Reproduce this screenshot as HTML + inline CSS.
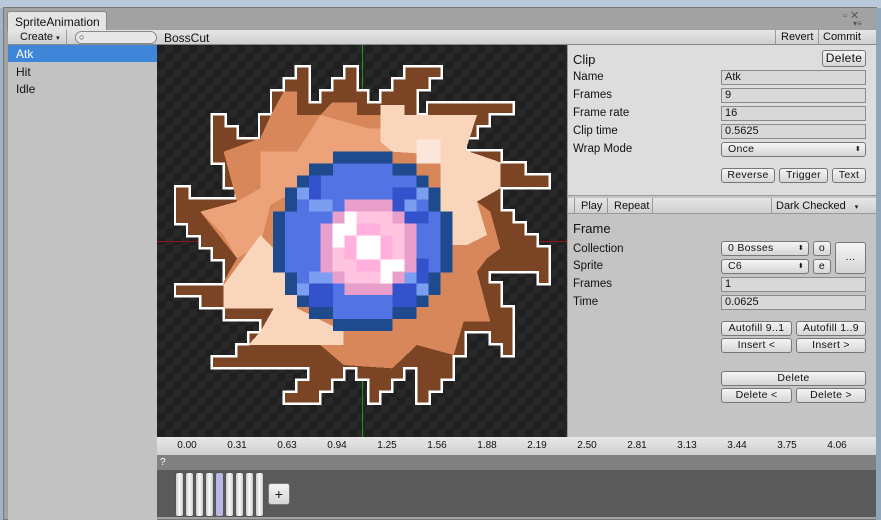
<!DOCTYPE html><html><head><style>
*{margin:0;padding:0;box-sizing:border-box}
body{width:881px;height:520px;overflow:hidden;background:#9fb4c8;font-family:"Liberation Sans",sans-serif;font-size:11px;color:#111;position:relative}
.a{position:absolute}
.btn{position:absolute;background:linear-gradient(#f4f4f4,#d6d6d6);border:1px solid #777;border-radius:3px;font-size:10.5px;text-align:center;line-height:13px;height:15px;letter-spacing:.3px}
.fld{position:absolute;background:#d8d8d8;border:1px solid #8a8a8a;height:15px;line-height:13px;padding-left:3px;font-size:11px}
.lbl{position:absolute;font-size:11.5px;left:573px}
.tk{position:absolute;top:440px;font-size:10px;width:40px;text-align:center}
.fr{position:absolute;top:472px;width:9px;height:45px;background:linear-gradient(90deg,#ccc,#fafafa,#ccc);border:1px solid #555;border-radius:3px}
</style></head><body>
<div class="a" style="left:0;top:0;width:881px;height:8px;background:#b9c9da"></div>
<div class="a" style="left:3px;top:7px;width:874px;height:513px;background:#a2a2a2;border:1px solid #777"></div>
<div class="a" style="left:7px;top:11px;width:100px;height:20px;background:#e4e4e4;border:1px solid #888;border-bottom:none;border-radius:3px 3px 0 0;font-size:12px;padding:3px 0 0 7px;overflow:hidden;white-space:nowrap">SpriteAnimation</div>
<div class="a" style="left:843px;top:9px;font-size:11px;color:#555">▫ ✕</div>
<div class="a" style="left:853px;top:19px;font-size:8px;color:#555">▾≡</div>
<div class="a" style="left:8px;top:30px;width:868px;height:15px;background:linear-gradient(#e6e6e6,#cfcfcf);border-bottom:1px solid #888"></div>
<div class="a" style="left:13px;top:30px;width:54px;height:15px;border-right:1px solid #999;font-size:11px;padding:1px 0 0 7px">Create <span style="font-size:7px">▾</span></div>
<div class="a" style="left:75px;top:31px;width:82px;height:13px;border:1px solid #888;border-radius:7px;background:#e8e8e8;font-size:9px;padding-left:3px;line-height:10px">○</div>
<div class="a" style="left:164px;top:31px;font-size:12px">BossCut</div>
<div class="a" style="left:775px;top:30px;width:44px;height:15px;border-left:1px solid #999;border-right:1px solid #999;font-size:11px;padding:1px 0 0 5px">Revert</div>
<div class="a" style="left:823px;top:31px;font-size:11px">Commit</div>
<div class="a" style="left:8px;top:45px;width:149px;height:475px;background:#c2c2c2"></div>
<div class="a" style="left:8px;top:45px;width:149px;height:17px;background:#3f86d8;color:#fff;font-size:12px;padding:2px 0 0 8px">Atk</div>
<div class="a" style="left:16px;top:65px;font-size:12px">Hit</div>
<div class="a" style="left:16px;top:82px;font-size:12px">Idle</div>
<div class="a" style="left:157px;top:45px;width:410px;height:392px;background-color:#1f1f1f;background-image:linear-gradient(45deg,#282828 25%,transparent 25%,transparent 75%,#282828 75%),linear-gradient(45deg,#282828 25%,transparent 25%,transparent 75%,#282828 75%);background-size:16px 16px;background-position:0 0,8px 8px"></div>
<div class="a" style="left:157px;top:241px;width:410px;height:1px;background:#8a1a1a"></div>
<div class="a" style="left:362px;top:45px;width:1px;height:392px;background:#1a9a1a"></div>
<svg class="a" style="left:157px;top:45px" width="410" height="392" viewBox="0 0 1230 1176" shape-rendering="crispEdges">
<polygon fill="#7b4424" stroke="#fff" stroke-width="7" points="416,64 458,64 458,172 490,172 490,136 526,136 526,100 562,100 562,64 602,64 602,136 634,136 634,172 670,172 670,136 706,136 706,100 742,100 742,64 854,64 854,100 818,100 818,136 782,136 782,208 810,208 810,172 1070,172 1070,208 998,208 998,244 962,244 962,280 926,280 926,316 1034,316 1034,352 1106,352 1106,388 1178,388 1178,430 1034,430 1034,496 1070,496 1070,532 1106,532 1106,568 1142,568 1142,604 1178,604 1178,718 1142,718 1142,682 998,682 998,712 1034,712 1034,784 1070,784 1070,934 1034,934 1034,898 998,898 998,862 926,862 926,934 890,934 890,1004 854,1004 854,1040 818,1040 818,1076 778,1076 778,970 742,970 742,1004 706,1004 706,1040 670,1040 670,1076 634,1076 634,1004 598,1004 598,970 562,970 562,1004 526,1004 526,1040 490,1040 490,1076 380,1076 380,1040 418,1040 418,1004 454,1004 454,970 164,970 164,934 238,934 238,898 274,898 274,862 310,862 310,826 200,826 200,790 130,790 130,754 54,754 54,718 200,718 200,646 164,646 164,610 128,610 128,574 90,574 90,538 54,538 54,424 98,424 98,460 236,460 236,430 200,430 200,356 164,356 164,208 206,208 206,244 242,244 242,280 306,280 306,208 342,208 342,136 380,136 380,100 416,100"/>
<polygon fill="#d8875a" points="380,140 420,140 420,210 490,210 526,172 600,172 600,210 742,210 780,250 960,210 926,316 1030,352 1030,430 960,470 1000,500 1030,610 990,640 960,680 1000,830 920,830 890,930 780,900 706,970 560,960 490,900 420,900 310,860 350,790 200,790 200,710 240,640 130,500 240,470 200,320 310,280 342,210"/>
<polygon fill="#eda37a" points="490,210 634,250 780,250 780,320 560,320 480,400 340,480 310,600 240,640 200,570 130,500 240,470 310,430 310,320 420,320"/>
<polygon fill="#f9d5bc" points="670,180 742,180 742,210 960,210 926,316 1030,352 1030,430 960,470 990,570 930,600 850,600 850,330 706,320 670,290"/>
<polygon fill="#f9d5bc" points="200,720 310,570 420,680 420,790 560,860 560,900 420,900 310,900 274,900 310,860 350,790 200,790"/>
<polygon fill="#fbe6dc" points="778,284 850,284 850,356 778,356"/>
<polygon fill="#1f4a8e" points="528,320 706,320 706,356 778,356 778,392 814,392 814,428 850,428 850,500 886,500 886,682 850,682 850,750 814,750 814,786 778,786 778,822 706,822 706,858 528,858 528,822 456,822 456,786 420,786 420,750 384,750 384,682 348,682 348,500 384,500 384,428 420,428 420,392 456,392 456,356 528,356"/>
<polygon fill="#5273e4" points="528,356 706,356 706,392 778,392 778,428 814,428 814,500 850,500 850,682 814,682 814,750 778,750 778,786 706,786 706,822 528,822 528,786 456,786 456,750 420,750 420,682 384,682 384,500 420,500 420,428 456,428 456,392 528,392"/>
<g fill="#3352cc"><rect x="456" y="392" width="36" height="72"/><rect x="706" y="428" width="72" height="72"/><rect x="742" y="500" width="72" height="36"/><rect x="456" y="716" width="72" height="70"/><rect x="706" y="716" width="72" height="70"/><rect x="778" y="640" width="36" height="76"/></g>
<g fill="#7b9ef0"><rect x="420" y="428" width="36" height="36"/><rect x="778" y="428" width="36" height="36"/><rect x="456" y="464" width="70" height="36"/><rect x="742" y="464" width="36" height="36"/><rect x="456" y="680" width="70" height="36"/><rect x="742" y="680" width="36" height="36"/><rect x="420" y="716" width="36" height="36"/><rect x="778" y="716" width="36" height="36"/></g>
<polygon fill="#e89fcc" points="562,464 706,464 706,500 742,500 742,536 778,536 778,682 742,682 742,716 706,716 706,750 562,750 562,716 526,716 526,682 490,682 490,536 526,536 526,500 562,500"/>
<polygon fill="#ffc4df" points="598,500 706,500 706,536 742,536 742,680 706,680 706,716 562,716 562,680 526,680 526,608 562,608 562,536 598,536"/>
<g fill="#ffb0dc"><rect x="598" y="536" width="72" height="36"/><rect x="562" y="572" width="36" height="72"/><rect x="670" y="572" width="36" height="72"/><rect x="598" y="644" width="72" height="36"/></g>
<g fill="#fff"><rect x="562" y="500" width="36" height="36"/><rect x="526" y="536" width="72" height="36"/><rect x="526" y="572" width="36" height="36"/><rect x="598" y="572" width="72" height="72"/><rect x="670" y="644" width="72" height="36"/><rect x="670" y="680" width="36" height="36"/></g>
</svg>
<div class="a" style="left:567px;top:45px;width:309px;height:150px;background:#dddddd;border-left:1px solid #999"></div>
<div class="a" style="left:567px;top:195px;width:309px;height:242px;background:#c4c4c4;border-left:1px solid #999;border-top:1px solid #999"></div>
<div class="a" style="left:876px;top:8px;width:5px;height:512px;background:#8fa5bb"></div>
<div class="a" style="left:573px;top:52px;font-size:13px">Clip</div>
<div class="btn" style="left:822px;top:50px;width:44px;height:17px;font-size:12px;line-height:15px">Delete</div>
<div class="lbl" style="top:71px">Name</div><div class="fld" style="left:721px;top:70px;width:145px">Atk</div>
<div class="lbl" style="top:89px">Frames</div><div class="fld" style="left:721px;top:88px;width:145px">9</div>
<div class="lbl" style="top:107px">Frame rate</div><div class="fld" style="left:721px;top:106px;width:145px">16</div>
<div class="lbl" style="top:125px">Clip time</div><div class="fld" style="left:721px;top:124px;width:145px">0.5625</div>
<div class="lbl" style="top:143px">Wrap Mode</div><div class="btn" style="left:721px;top:142px;width:145px;text-align:left;padding-left:6px">Once<span style="float:right;margin-right:4px;font-size:7px">⬍</span></div>
<div class="btn" style="left:721px;top:168px;width:54px">Reverse</div>
<div class="btn" style="left:779px;top:168px;width:49px">Trigger</div>
<div class="btn" style="left:832px;top:168px;width:34px">Text</div>
<div class="a" style="left:568px;top:198px;width:308px;height:16px;background:linear-gradient(#e6e6e6,#cfcfcf);border-bottom:1px solid #999"></div>
<div class="a" style="left:574px;top:198px;width:34px;height:16px;border-left:1px solid #999;border-right:1px solid #999;padding:2px 0 0 6px;font-size:11px">Play</div>
<div class="a" style="left:614px;top:200px;font-size:11px">Repeat</div>
<div class="a" style="left:652px;top:198px;width:1px;height:16px;background:#999"></div>
<div class="a" style="left:771px;top:198px;width:1px;height:16px;background:#999"></div>
<div class="a" style="left:776px;top:200px;font-size:11px">Dark Checked <span style="font-size:7px;margin-left:6px">▾</span></div>
<div class="a" style="left:573px;top:221px;font-size:13px">Frame</div>
<div class="lbl" style="top:243px">Collection</div><div class="btn" style="left:721px;top:241px;width:88px;text-align:left;padding-left:6px">0 Bosses<span style="float:right;margin-right:4px;font-size:7px">⬍</span></div>
<div class="btn" style="left:813px;top:241px;width:18px">o</div>
<div class="lbl" style="top:260px">Sprite</div><div class="btn" style="left:721px;top:259px;width:88px;text-align:left;padding-left:6px">C6<span style="float:right;margin-right:4px;font-size:7px">⬍</span></div>
<div class="btn" style="left:813px;top:259px;width:18px">e</div>
<div class="btn" style="left:835px;top:242px;width:31px;height:32px;line-height:28px">...</div>
<div class="lbl" style="top:278px">Frames</div><div class="fld" style="left:721px;top:277px;width:145px">1</div>
<div class="lbl" style="top:296px">Time</div><div class="fld" style="left:721px;top:295px;width:145px">0.0625</div>
<div class="btn" style="left:721px;top:321px;width:71px">Autofill 9..1</div>
<div class="btn" style="left:796px;top:321px;width:70px">Autofill 1..9</div>
<div class="btn" style="left:721px;top:338px;width:71px">Insert &lt;</div>
<div class="btn" style="left:796px;top:338px;width:70px">Insert &gt;</div>
<div class="btn" style="left:721px;top:371px;width:145px">Delete</div>
<div class="btn" style="left:721px;top:388px;width:71px">Delete &lt;</div>
<div class="btn" style="left:796px;top:388px;width:70px">Delete &gt;</div>
<div class="a" style="left:157px;top:437px;width:719px;height:18px;background:linear-gradient(#e8e8e8,#d0d0d0)"></div>
<div class="tk" style="left:167px">0.00</div><div class="tk" style="left:217px">0.31</div><div class="tk" style="left:267px">0.63</div><div class="tk" style="left:317px">0.94</div><div class="tk" style="left:367px">1.25</div><div class="tk" style="left:417px">1.56</div><div class="tk" style="left:467px">1.88</div><div class="tk" style="left:517px">2.19</div><div class="tk" style="left:567px">2.50</div><div class="tk" style="left:617px">2.81</div><div class="tk" style="left:667px">3.13</div><div class="tk" style="left:717px">3.44</div><div class="tk" style="left:767px">3.75</div><div class="tk" style="left:817px">4.06</div>
<div class="a" style="left:157px;top:455px;width:719px;height:15px;background:#808080;color:#fff;font-size:10px;padding:2px 0 0 3px">?</div>
<div class="a" style="left:157px;top:470px;width:719px;height:47px;background:#5a5a5a"></div>
<div class="fr" style="left:175px"></div><div class="fr" style="left:185px"></div><div class="fr" style="left:195px"></div><div class="fr" style="left:205px"></div><div class="fr" style="left:215px;background:#b8b8e2"></div><div class="fr" style="left:225px"></div><div class="fr" style="left:235px"></div><div class="fr" style="left:245px"></div><div class="fr" style="left:255px"></div>
<div class="btn" style="left:268px;top:483px;width:22px;height:22px;line-height:20px;font-size:14px">+</div>
</body></html>
